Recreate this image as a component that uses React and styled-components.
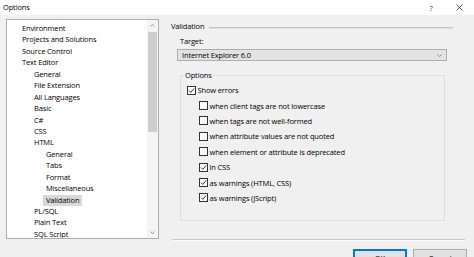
import React from "react";
import styled, { createGlobalStyle } from "styled-components";

const GlobalStyle = createGlobalStyle`
  html, body {
    margin: 0;
    padding: 0;
    background: #f0f0f0;
  }
  body {
    font-family: "Open Sans", "Noto Sans", Arial, sans-serif;
    font-size: 7.5px;
    letter-spacing: -0.15px;
    color: #000;
  }
`;

const Window = styled.div`
  width: 474px;
  height: 257px;
  overflow: hidden;
  background: #f0f0f0;
  display: flex;
  flex-direction: column;
`;

const TitleBar = styled.div`
  height: 15px;
  flex: none;
  background: #fff;
  display: flex;
  align-items: center;
  padding-left: 3px;
  padding-right: 1px;
`;

const Title = styled.span`
  flex: 1;
  line-height: 15px;
`;

const TitleButton = styled.span`
  width: 28px;
  height: 15px;
  display: flex;
  align-items: center;
  justify-content: center;
  color: #333;
`;

const Body = styled.div`
  flex: 1;
  min-height: 0;
  display: flex;
  padding: 4px 0 0 6px;
`;

const Tree = styled.div`
  width: 153px;
  height: 220px;
  flex: none;
  box-sizing: border-box;
  border: 1px solid #adadad;
  background: #fff;
  display: flex;
`;

const TreeList = styled.ul`
  flex: 1;
  list-style: none;
  margin: 0;
  padding: 3px 0 0;
  overflow: hidden;
`;

const TreeRow = styled.li`
  height: 11.45px;
  line-height: 11.45px;
  padding-left: ${(p) => 12 + p.$level * 12}px;
  white-space: nowrap;
`;

const TreeLabel = styled.span`
  display: inline-block;
  padding: 0 3px;
  height: 11px;
  line-height: 11px;
  background: ${(p) => (p.$selected ? "#d9d9d9" : "transparent")};
`;

const ScrollBar = styled.div`
  width: 11px;
  flex: none;
  background: #f4f4f4;
  display: flex;
  flex-direction: column;
`;

const ScrollArrow = styled.div`
  height: 11px;
  display: flex;
  align-items: center;
  justify-content: center;
`;

const ScrollThumb = styled.div`
  height: 100px;
  width: 9px;
  margin: 1px 0 0 1px;
  background: #cdcdcd;
`;

const ScrollSpace = styled.div`
  flex: 1;
`;

const Panel = styled.div`
  flex: 1;
  display: flex;
  flex-direction: column;
  padding: 0 7px 0 12px;
`;

const SectionHeader = styled.div`
  display: flex;
  align-items: center;
  height: 11px;
  margin: 2px 14px 0 0;
`;

const HeaderRule = styled.div`
  flex: 1;
  margin: 4px 0 0 5px;
  border-top: 1px solid #c4c4c4;
  border-bottom: 1px solid #dedede;
`;

const FieldLabel = styled.div`
  line-height: 11px;
  margin: 5px 0 0 9px;
`;

const Select = styled.div`
  height: 15px;
  box-sizing: border-box;
  margin: 2px 20px 0 6px;
  border: 1px solid #adadad;
  background: #e3e3e3;
  display: flex;
  align-items: center;
  padding: 0 4px;
`;

const SelectValue = styled.span`
  flex: 1;
`;

const Group = styled.fieldset`
  margin: 8.5px 22px 0 9px;
  padding: 2px 6px 14.5px;
  border: 1px solid #dcdcdc;
  min-width: 0;
`;

const Legend = styled.legend`
  padding: 0 1px;
  margin-left: -3px;
  line-height: 11px;
`;

const CheckRow = styled.label`
  height: 15.4px;
  display: flex;
  align-items: center;
  gap: 1.5px;
  padding-left: ${(p) => p.$level * 12}px;
  white-space: nowrap;
`;

const Box = styled.span`
  width: 9px;
  height: 9px;
  box-sizing: border-box;
  border: 1px solid #333;
  background: #fff;
  display: flex;
  flex: none;
`;

const Separator = styled.div`
  margin: 18px 2px 0 1px;
  border-top: 1px solid #c8c8c8;
  border-bottom: 1px solid #fbfbfb;
`;

const Buttons = styled.div`
  display: flex;
  justify-content: flex-end;
  gap: 6px;
  margin-top: 8px;
`;

const Button = styled.button`
  width: 54px;
  height: 17px;
  box-sizing: border-box;
  font: inherit;
  color: #000;
  background: #e1e1e1;
  border: 1px solid ${(p) => (p.$primary ? "#0078d7" : "#adadad")};
  box-shadow: ${(p) => (p.$primary ? "inset 0 0 0 1px #0078d7" : "none")};
  padding: 0;
`;

const Chevron = ({ up, size = 5 }) => (
  <svg width={size} height={size * 0.6} viewBox="0 0 10 6">
    <path
      d={up ? "M1 5 L5 1 L9 5" : "M1 1 L5 5 L9 1"}
      fill="none"
      stroke="#606060"
      strokeWidth="1.3"
    />
  </svg>
);

const CheckBox = ({ checked }) => (
  <Box>
    {checked && (
      <svg width="7" height="7" viewBox="0 0 7 7">
        <path d="M1 3.6 L2.8 5.4 L6.2 1.4" fill="none" stroke="#222" strokeWidth="0.9" />
      </svg>
    )}
  </Box>
);

const treeItems = [
  ["Environment", 0],
  ["Projects and Solutions", 0],
  ["Source Control", 0],
  ["Text Editor", 0],
  ["General", 1],
  ["File Extension", 1],
  ["All Languages", 1],
  ["Basic", 1],
  ["C#", 1],
  ["CSS", 1],
  ["HTML", 1],
  ["General", 2],
  ["Tabs", 2],
  ["Format", 2],
  ["Miscellaneous", 2],
  ["Validation", 2, true],
  ["PL/SQL", 1],
  ["Plain Text", 1],
  ["SQL Script", 1],
];

const options = [
  ["Show errors", 0, true],
  ["when client tags are not lowercase", 1, false],
  ["when tags are not well-formed", 1, false],
  ["when attribute values are not quoted", 1, false],
  ["when element or attribute is deprecated", 1, false],
  ["in CSS", 1, true],
  ["as warnings (HTML, CSS)", 1, true],
  ["as warnings (JScript)", 1, true],
];

const App = () => {
  return (
    <>
      <GlobalStyle />
      <Window>
        <TitleBar>
          <Title>Options</Title>
          <TitleButton>?</TitleButton>
          <TitleButton>
            <svg width="7" height="7" viewBox="0 0 7 7">
              <path d="M0.5 0.5 L6.5 6.5 M6.5 0.5 L0.5 6.5" stroke="#333" strokeWidth="0.8" />
            </svg>
          </TitleButton>
        </TitleBar>
        <Body>
          <Tree>
            <TreeList>
              {treeItems.map(([label, level, selected], i) => (
                <TreeRow key={i} $level={level}>
                  <TreeLabel $selected={selected}>{label}</TreeLabel>
                </TreeRow>
              ))}
            </TreeList>
            <ScrollBar>
              <ScrollArrow>
                <Chevron up size={5} />
              </ScrollArrow>
              <ScrollThumb />
              <ScrollSpace />
              <ScrollArrow>
                <Chevron size={5} />
              </ScrollArrow>
            </ScrollBar>
          </Tree>
          <Panel>
            <SectionHeader>
              <span>Validation</span>
              <HeaderRule />
            </SectionHeader>
            <FieldLabel>Target:</FieldLabel>
            <Select>
              <SelectValue>Internet Explorer 6.0</SelectValue>
              <Chevron size={5} />
            </Select>
            <Group>
              <Legend>Options</Legend>
              {options.map(([label, level, checked], i) => (
                <CheckRow key={i} $level={level}>
                  <CheckBox checked={checked} />
                  <span>{label}</span>
                </CheckRow>
              ))}
            </Group>
            <Separator />
            <Buttons>
              <Button $primary>OK</Button>
              <Button>Cancel</Button>
            </Buttons>
          </Panel>
        </Body>
      </Window>
    </>
  );
};

export default App;
